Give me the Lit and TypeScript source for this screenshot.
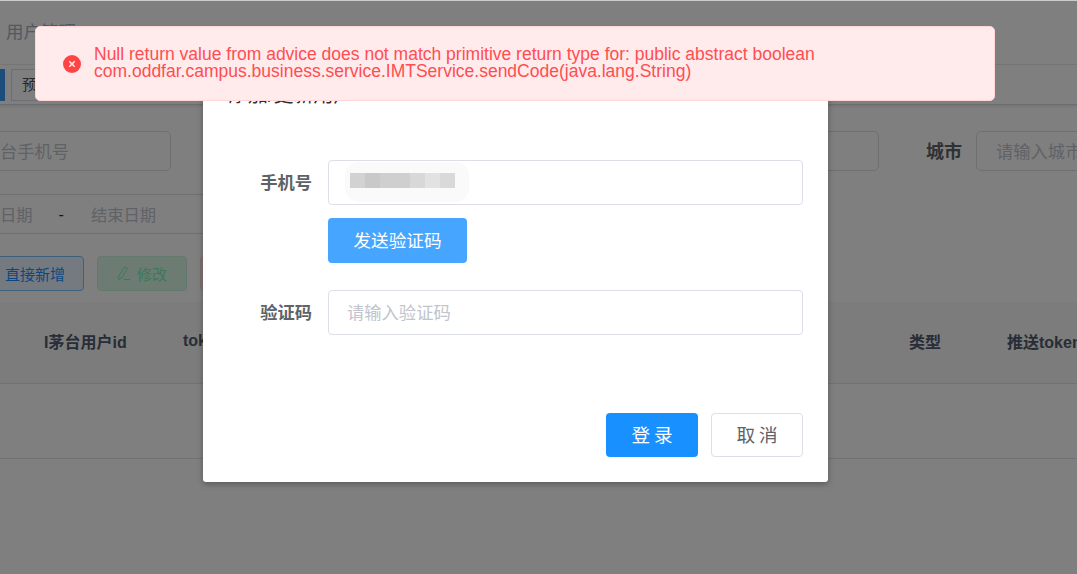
import { LitElement, html, css } from 'lit'
import { customElement } from 'lit/decorators.js'

const MOSAIC = ['#d2d2d2', '#c9c9c9', '#cfcfcf', '#cfcfcf', '#d8d8d8', '#e2e2e2', '#d9d9d9']
const COLUMNS = [
  { label: 'I茅台用户id', width: 139 },
  { label: 'token', width: 726 },
  { label: '类型', width: 98 },
  { label: '推送token', width: 200 },
]

@customElement('app-root')
export class AppRoot extends LitElement {
  static styles = css`
    :host {
      display: block;
      position: relative;
      width: 1077px;
      height: 574px;
      overflow: hidden;
      background: #fff;
      font-family: 'Liberation Sans', 'Noto Sans CJK SC', sans-serif;
      color: #606266;
    }

    /* page behind the mask */
    .page {
      display: flex;
      flex-direction: column;
      height: 100%;
    }
    .title {
      height: 65px;
      flex-shrink: 0;
      padding: 19px 0 0 6px;
      box-sizing: border-box;
      font-size: 17.5px;
      line-height: 26px;
      color: #a3b0c4;
      border-bottom: 1px solid #f0f0f0;
    }
    .tags {
      display: flex;
      height: 40px;
      flex-shrink: 0;
      padding-top: 4px;
      box-sizing: border-box;
      gap: 6px;
      border-bottom: 1px solid #d8dce5;
      box-shadow: 0 1px 3px rgba(0, 0, 0, 0.12);
    }
    .tag-active {
      width: 5px;
      height: 32px;
      background: #3a9bf5;
    }
    .tag {
      width: 100px;
      height: 32px;
      box-sizing: border-box;
      padding-left: 10px;
      border: 1px solid #d8dce5;
      font-size: 15px;
      line-height: 30px;
      color: #495060;
    }
    .filters {
      display: flex;
      align-items: center;
      margin: 26px 0 0 -170px;
      flex-shrink: 0;
    }
    .field {
      height: 40px;
      box-sizing: border-box;
      border: 1px solid #dcdfe6;
      border-radius: 5px;
      padding-left: 19px;
      flex-shrink: 0;
      font-size: 17.3px;
      line-height: 40px;
      color: #c0c4cc;
      white-space: nowrap;
    }
    .field-phone {
      width: 341px;
      padding-left: 95px;
    }
    .field-token {
      width: 600px;
      margin-left: 108px;
    }
    .field-city {
      width: 200px;
    }
    .filter-label {
      flex-shrink: 0;
      margin: 0 14px 2px 47px;
      font-size: 18px;
      font-weight: 700;
      white-space: nowrap;
      color: #606266;
    }
    .dates {
      display: flex;
      align-items: center;
      width: 260px;
      height: 40px;
      flex-shrink: 0;
      box-sizing: border-box;
      margin-top: 23px;
      border-top: 1px solid #dcdfe6;
      border-bottom: 1px solid #dcdfe6;
      font-size: 16.3px;
      color: #c0c4cc;
    }
    .dates .dash {
      margin: 0 27px 0 26px;
      color: #303133;
    }
    .toolbar {
      display: flex;
      gap: 13px;
      height: 35px;
      flex-shrink: 0;
      margin: 22px 0 0 -30px;
    }
    .btn {
      display: flex;
      align-items: center;
      justify-content: center;
      gap: 5px;
      width: 90px;
      box-sizing: border-box;
      padding-bottom: 1px;
      border-radius: 4px;
      font-size: 15px;
      border: 1px solid;
    }
    .btn-add {
      width: 114px;
      padding-left: 16px;
      background: #e8f4ff;
      border-color: #7cc0ff;
      color: #1890ff;
    }
    .btn-edit {
      background: #d8f8e6;
      border-color: #c8f2da;
      color: #7ef0b0;
    }
    .btn-del {
      background: #ffeded;
      border-color: #ffdbdb;
      color: #ff4949;
    }
    .btn svg {
      width: 15px;
      height: 17px;
    }
    .thead {
      display: flex;
      align-items: center;
      height: 82px;
      flex-shrink: 0;
      margin-top: 11px;
      padding: 0 0 3px 44px;
      box-sizing: border-box;
      background: #f8f8f9;
      border-bottom: 1px solid #dfe6ec;
      font-size: 16px;
      font-weight: 700;
      color: #515a6e;
      white-space: nowrap;
    }
    .thead span {
      flex-shrink: 0;
    }
    .row {
      height: 75px;
      flex-shrink: 0;
      box-sizing: border-box;
      border-bottom: 1px solid #dfe6ec;
    }

    .mask {
      position: absolute;
      inset: 0;
      box-sizing: border-box;
      border-top: 1px solid rgba(0, 0, 0, 0.2);
      background: rgba(0, 0, 0, 0.5);
      background-clip: padding-box;
    }

    /* dialog */
    .dialog {
      position: absolute;
      left: 203px;
      top: 70px;
      width: 625px;
      height: 412px;
      box-sizing: border-box;
      display: flex;
      flex-direction: column;
      background: #fff;
      border-radius: 3px;
      box-shadow: 0 2px 6px rgba(0, 0, 0, 0.3);
    }
    .dialog-title {
      padding: 11px 25px 0;
      height: 90px;
      box-sizing: border-box;
      font-size: 20px;
      line-height: 28px;
      color: #303133;
    }
    .form-row {
      display: flex;
      align-items: center;
      padding-right: 25px;
    }
    .form-label {
      width: 125px;
      flex-shrink: 0;
      text-align: right;
      padding: 0 16px 3px 0;
      box-sizing: border-box;
      font-size: 17.3px;
      font-weight: 700;
      color: #606266;
    }
    .input {
      flex: 1;
      display: flex;
      align-items: center;
      height: 45px;
      box-sizing: border-box;
      padding: 0 0 3px 18px;
      border: 1px solid #dcdfe6;
      border-radius: 4px;
      font-size: 17.3px;
      color: #c0c4cc;
    }
    .smear {
      width: 124px;
      height: 40px;
      margin: 2px 0 0 -2px;
      box-sizing: border-box;
      padding: 11px 0 0 5px;
      border-radius: 14px;
      background: #fafafa;
    }
    .mosaic {
      display: flex;
    }
    .mosaic i {
      width: 15px;
      height: 15px;
    }
    .send {
      margin: 13px 0 27px 125px;
      width: 139px;
      height: 45px;
      box-sizing: border-box;
      padding-bottom: 3px;
      display: flex;
      align-items: center;
      justify-content: center;
      border-radius: 4px;
      background: #46a6ff;
      color: #fff;
      font-size: 17.6px;
    }
    .footer {
      display: flex;
      justify-content: flex-end;
      gap: 13px;
      padding-right: 25px;
      margin-top: 78px;
    }
    .action {
      width: 92px;
      height: 44px;
      box-sizing: border-box;
      padding-bottom: 4px;
      display: flex;
      align-items: center;
      justify-content: center;
      border-radius: 4px;
      font-size: 18.6px;
      letter-spacing: 4px;
      text-indent: 4px;
    }
    .action-primary {
      background: #1890ff;
      color: #fff;
    }
    .action-plain {
      border: 1px solid #dcdfe6;
      color: #606266;
    }

    /* error message */
    .message {
      position: absolute;
      left: 35px;
      top: 26px;
      width: 960px;
      height: 75px;
      box-sizing: border-box;
      display: flex;
      align-items: center;
      gap: 13px;
      padding-left: 27px;
      background: #ffebeb;
      border: 1px solid #ffd6d6;
      border-radius: 5px;
      color: #ff4d51;
      font-size: 17.5px;
      line-height: 17px;
    }
    .message svg {
      width: 18px;
      height: 18px;
      flex-shrink: 0;
    }
    .message span {
      padding-bottom: 2px;
    }
  `

  override render() {
    return html`
      <div class="page">
        <div class="title">用户管理</div>
        <div class="tags">
          <div class="tag-active"></div>
          <div class="tag">预览</div>
        </div>
        <div class="filters">
          <div class="field field-phone">请输入I茅台手机号</div>
          <div class="field field-token"></div>
          <span class="filter-label">城市</span>
          <div class="field field-city">请输入城市</div>
        </div>
        <div class="dates">
          <span>日期</span>
          <span class="dash">-</span>
          <span>结束日期</span>
        </div>
        <div class="toolbar">
          <div class="btn btn-add">直接新增</div>
          <div class="btn btn-edit">
            <svg viewBox="0 0 15 17" fill="none" stroke="currentColor" stroke-width="1">
              <path d="M7.5 2 10.5 3.5 4.5 13 1.5 14.5 1.7 11z" />
              <path d="M7 14.5h6" />
            </svg>
            修改
          </div>
          <div class="btn btn-del">删除</div>
        </div>
        <div class="thead">
          ${COLUMNS.map(c => html`<span style="width:${c.width}px">${c.label}</span>`)}
        </div>
        <div class="row"></div>
      </div>

      <div class="mask"></div>

      <div class="dialog">
        <div class="dialog-title">添加/更新用户</div>
        <div class="form-row">
          <span class="form-label">手机号</span>
          <div class="input">
            <div class="smear">
              <div class="mosaic">
                ${MOSAIC.map(c => html`<i style="background:${c}"></i>`)}
              </div>
            </div>
          </div>
        </div>
        <div class="send">发送验证码</div>
        <div class="form-row">
          <span class="form-label">验证码</span>
          <div class="input">请输入验证码</div>
        </div>
        <div class="footer">
          <div class="action action-primary">登录</div>
          <div class="action action-plain">取消</div>
        </div>
      </div>

      <div class="message">
        <svg viewBox="0 0 18 18">
          <circle cx="9" cy="9" r="9" fill="#ff4444" />
          <path d="M6.3 6.3l5.4 5.4M11.7 6.3l-5.4 5.4" stroke="#ffe8e8" stroke-width="1.6" />
        </svg>
        <span>Null return value from advice does not match primitive return type for: public abstract boolean<br />com.oddfar.campus.business.service.IMTService.sendCode(java.lang.String)</span>
      </div>
    `
  }
}
